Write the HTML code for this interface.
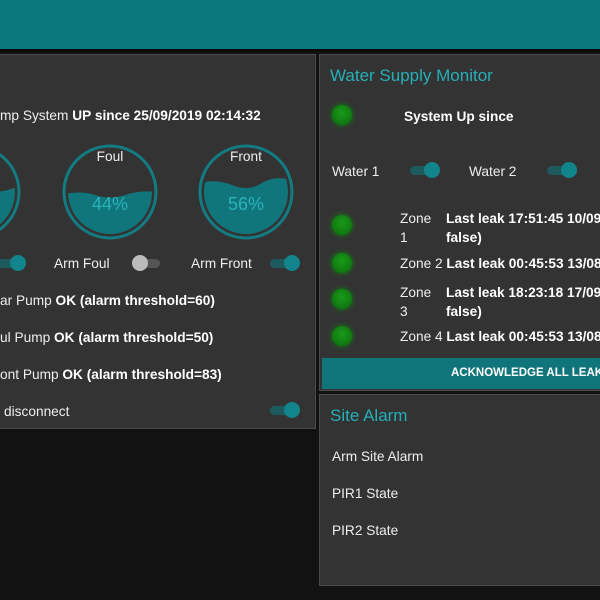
<!DOCTYPE html>
<html><head><style>
body{margin:0;width:600px;height:600px;background:#121212;overflow:hidden;position:relative;font-family:"Liberation Sans","DejaVu Sans",sans-serif;color:#eee;font-size:13.7px}
.a{position:absolute;white-space:nowrap}
.p{position:absolute;background:#333;border:1px solid #4a4a4a;box-sizing:border-box}
b{font-weight:bold;color:#fff}
.led{position:absolute;width:20px;height:20px;border-radius:50%;background:radial-gradient(circle at 50% 40%,#1a9a1a,#0a6a0a);box-shadow:0 0 6px #0c8a0c}
.tg{position:absolute;width:30px;height:14px}
.tg .t{position:absolute;left:0;top:3px;width:28px;height:9px;border-radius:5px;background:#1d5a5e}
.tg .k{position:absolute;right:0;top:-1px;width:16px;height:16px;border-radius:50%;background:#12858c}
h2{margin:0;font-weight:normal;color:#25b0b8;font-size:17px}
</style></head><body>
<div class="a" style="left:0;top:0;width:600px;height:49px;background:#0b787d"></div>
<div class="a" style="left:0;top:49px;width:600px;height:3px;background:#0a0a0a"></div>

<div class="p" style="left:-2px;top:54px;width:318px;height:375px"></div>
<div class="a" style="left:0;top:108px">mp System <b>UP since 25/09/2019 02:14:32</b></div>
<svg class="a" style="left:0;top:140px" width="316" height="110">
<defs>
<clipPath id="c1"><circle cx="-27" cy="52" r="42"/></clipPath>
<clipPath id="c2"><circle cx="110" cy="52" r="42"/></clipPath>
<clipPath id="c3"><circle cx="246" cy="52" r="42"/></clipPath>
</defs>
<circle cx="-27" cy="52" r="46" fill="none" stroke="#127c82" stroke-width="3"/>
<path clip-path="url(#c1)" d="M-80 50 Q-50 44 -27 50 T20 46 V110 H-80Z" fill="#11767b"/>
<circle cx="110" cy="52" r="46" fill="none" stroke="#127c82" stroke-width="3"/>
<path clip-path="url(#c2)" d="M60 55 Q80 50 95 55 T125 55 T160 52 V110 H60Z" fill="#11767b"/>
<circle cx="246" cy="52" r="46" fill="none" stroke="#127c82" stroke-width="3"/>
<path clip-path="url(#c3)" d="M196 44 Q215 38 232 45 T262 43 T300 42 V110 H196Z" fill="#11767b"/>
<text x="110" y="21" fill="#eee" font-size="13.7" text-anchor="middle" font-family="Liberation Sans">Foul</text>
<text x="246" y="21" fill="#eee" font-size="13.7" text-anchor="middle" font-family="Liberation Sans">Front</text>
<text x="110" y="70" fill="#29b3bb" font-size="18" text-anchor="middle" font-family="Liberation Sans">44%</text>
<text x="246" y="70" fill="#29b3bb" font-size="18" text-anchor="middle" font-family="Liberation Sans">56%</text>
</svg>
<div class="tg" style="left:-4px;top:256px"><div class="t"></div><div class="k"></div></div>
<div class="a" style="left:54px;top:256px">Arm Foul</div>
<div class="tg" style="left:132px;top:256px"><div class="t" style="background:#555"></div><div class="k" style="left:0;background:#bbb"></div></div>
<div class="a" style="left:191px;top:256px">Arm Front</div>
<div class="tg" style="left:270px;top:256px"><div class="t"></div><div class="k"></div></div>
<div class="a" style="left:0;top:293px">ar Pump <b>OK (alarm threshold=60)</b></div>
<div class="a" style="left:0;top:330px">ul Pump <b>OK (alarm threshold=50)</b></div>
<div class="a" style="left:0;top:367px">ont Pump <b>OK (alarm threshold=83)</b></div>
<div class="a" style="left:4px;top:404px">disconnect</div>
<div class="tg" style="left:270px;top:403px"><div class="t"></div><div class="k"></div></div>

<div class="p" style="left:319px;top:54px;width:290px;height:337px"></div>
<div class="a" style="left:330px;top:66px"><h2>Water Supply Monitor</h2></div>
<div class="led" style="left:332px;top:105px"></div>
<div class="a" style="left:404px;top:109px"><b>System Up since</b></div>
<div class="a" style="left:332px;top:164px">Water 1</div>
<div class="tg" style="left:410px;top:163px"><div class="t"></div><div class="k"></div></div>
<div class="a" style="left:469px;top:164px">Water 2</div>
<div class="tg" style="left:547px;top:163px"><div class="t"></div><div class="k"></div></div>
<div class="led" style="left:332px;top:215px"></div>
<div class="a" style="left:400px;top:209px;line-height:19px">Zone<br>1</div>
<div class="a" style="left:446px;top:209px;line-height:19px"><b>Last leak 17:51:45 10/09<br>false)</b></div>
<div class="led" style="left:332px;top:253px"></div>
<div class="a" style="left:400px;top:256px">Zone 2 <b>Last leak 00:45:53 13/08</b></div>
<div class="led" style="left:332px;top:289px"></div>
<div class="a" style="left:400px;top:283px;line-height:19px">Zone<br>3</div>
<div class="a" style="left:446px;top:283px;line-height:19px"><b>Last leak 18:23:18 17/09<br>false)</b></div>
<div class="led" style="left:332px;top:326px"></div>
<div class="a" style="left:400px;top:329px">Zone 4 <b>Last leak 00:45:53 13/08</b></div>
<div class="a" style="left:322px;top:358px;width:290px;height:31px;background:#10757a"></div>
<div class="a" style="left:451px;top:367px;font-size:11.5px;font-weight:bold;color:#fff">ACKNOWLEDGE ALL LEAKS</div>

<div class="p" style="left:319px;top:394px;width:290px;height:192px"></div>
<div class="a" style="left:330px;top:406px"><h2>Site Alarm</h2></div>
<div class="a" style="left:332px;top:449px">Arm Site Alarm</div>
<div class="a" style="left:332px;top:486px">PIR1 State</div>
<div class="a" style="left:332px;top:523px">PIR2 State</div>
</body></html>
